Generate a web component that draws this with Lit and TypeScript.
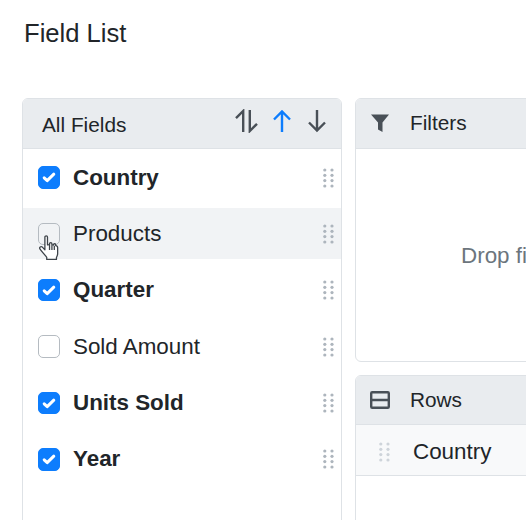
import { LitElement, html, css, svg } from "lit";
import { customElement } from "lit/decorators.js";

const FIELDS = [
  { name: "Country", on: true },
  { name: "Products", on: false, hover: true },
  { name: "Quarter", on: true },
  { name: "Sold Amount", on: false },
  { name: "Units Sold", on: true },
  { name: "Year", on: true },
];

const grip = (cls: string) => html`<svg class=${cls} width="11" height="20" viewBox="0 0 11 20">
  ${[2, 7.3, 12.6, 18].map((y) => svg`<circle cx="1.8" cy=${y} r="1.6"></circle><circle cx="9" cy=${y} r="1.6"></circle>`)}
</svg>`;

@customElement("app-root")
export class AppRoot extends LitElement {
  static styles = css`
    :host {
      display: block;
      width: 526px;
      height: 520px;
      overflow: hidden;
      background: #fff;
      font-family: "Liberation Sans", Arial, sans-serif;
      color: #212529;
    }
    .title {
      font-size: 25.6px;
      line-height: 28px;
      font-weight: 400;
      margin: 0;
      padding: 19px 0 0 24px;
      height: 98px;
      box-sizing: border-box;
    }
    .columns {
      display: grid;
      grid-template-columns: 320px 320px;
      column-gap: 13px;
      padding-left: 22px;
      align-items: start;
    }
    .stack {
      display: flex;
      flex-direction: column;
      gap: 13px;
    }
    .panel {
      border: 1px solid #dee2e6;
      border-radius: 6px;
      box-sizing: border-box;
      background: #fff;
      overflow: hidden;
    }
    .fields { height: 480px; }
    .filters { height: 264px; }
    .rows { height: 200px; }
    .head {
      display: flex;
      align-items: center;
      height: 50px;
      background: #e9ecef;
      border-bottom: 1px solid #dee2e6;
      box-sizing: border-box;
      font-size: 20.8px;
    }
    .head.all {
      padding: 0 12px 0 19px;
      justify-content: space-between;
    }
    .head.all span { position: relative; top: 1px; }
    .sorters {
      display: flex;
      gap: 11px;
      align-items: center;
      position: relative;
      top: -3px;
    }
    .sorters svg { display: block; }
    .head.drop { padding: 0 0 2px 14px; gap: 20px; }
    .rows .head.drop { height: 49px; padding-bottom: 1px; }
    .head.drop svg { display: block; flex: none; }
    .list {
      display: flex;
      flex-direction: column;
      gap: 5.4px;
      padding-top: 3px;
    }
    .row {
      height: 51px;
      display: flex;
      align-items: center;
      padding: 0 7px 0 15px;
      font-size: 22.4px;
      position: relative;
    }
    .row.hover { background: #f1f3f5; }
    .box {
      width: 22.4px;
      height: 22.4px;
      flex: none;
      box-sizing: border-box;
      border-radius: 5px;
      border: 1.25px solid #b5bbc1;
      background: #fff;
      display: flex;
      align-items: center;
      justify-content: center;
    }
    .box.on { background: #0d7dfd; border-color: #0d7dfd; }
    .row.hover .box { background: #f1f3f5; }
    .label { margin-left: 12.6px; flex: 1; }
    .label.on { font-weight: 700; }
    .grip { fill: #adb5bd; flex: none; }
    .cursor {
      position: absolute;
      left: 15px;
      top: 27px;
    }
    .empty {
      height: 213px;
      display: flex;
      align-items: center;
      padding-left: 105px;
      font-size: 22.4px;
      color: #6c757d;
      white-space: nowrap;
    }
    .item {
      height: 51px;
      display: flex;
      align-items: center;
      gap: 23px;
      padding: 4px 0 0 23px;
      background: #f8f9fa;
      border-bottom: 1px solid #dee2e6;
      box-sizing: border-box;
      font-size: 22.4px;
    }
    .grip.soft { fill: #ced4da; }
  `;

  render() {
    return html`
      <h1 class="title">Field List</h1>
      <div class="columns">
        <section class="panel fields">
          <div class="head all">
            <span>All Fields</span>
            <div class="sorters">
              <svg width="24" height="24" viewBox="0 0 24 24" fill="none" stroke="#495057" stroke-width="2.4">
                <path d="M1 9.200 8.200 2V23"></path>
                <path d="M14.800 1V22L22 14.800"></path>
              </svg>
              <svg width="24" height="24" viewBox="0 0 24 24" fill="none" stroke="#0d7dfd" stroke-width="2.4">
                <path d="M12 23V2.500M4 10.500l8-8 8 8"></path>
              </svg>
              <svg width="24" height="24" viewBox="0 0 24 24" fill="none" stroke="#495057" stroke-width="2.4">
                <path d="M12 1v20.500M4 13.500l8 8 8-8"></path>
              </svg>
            </div>
          </div>
          <div class="list">
            ${FIELDS.map(
              (f) => html`<div class="row ${f.hover ? "hover" : ""}">
                <span class="box ${f.on ? "on" : ""}">
                  ${f.on
                    ? html`<svg width="14" height="11" viewBox="0 0 14 11" fill="none" stroke="#fff" stroke-width="3" stroke-linecap="round" stroke-linejoin="round"><path d="M2.200 5.800 5.200 8.600 11.800 2.200"></path></svg>`
                    : ""}
                </span>
                <span class="label ${f.on ? "on" : ""}">${f.name}</span>
                ${grip("grip")}
                ${f.hover
                  ? html`<svg class="cursor" width="22" height="27" viewBox="0 0 20 25" fill="#fff" stroke="#3d4349" stroke-width="1.200" stroke-linejoin="round">
                      <path d="M6.200 1.900c0-1.500 2.400-1.500 2.400 0v7.300l1.900-.3v-.9c0-1.300 2.200-1.300 2.200 0v1.200l1.500.1v-.5c0-1.100 2-1.100 2 0v1l.9.2c.6.3.9.8.9 1.600v5.600c0 1.400-.4 2.400-1.100 3.600v1.800H7.900v-1.900c-1.200-1.500-5.600-6.700-6.300-7.800-.9-1.400.9-2.800 2.200-1.700l2.400 2.400z"></path>
                      <path d="M10.500 9v5M12.700 9.500V14M14.900 10v4" fill="none"></path>
                    </svg>`
                  : ""}
              </div>`
            )}
          </div>
        </section>
        <div class="stack">
          <section class="panel filters">
            <div class="head drop">
              <svg width="20" height="20" viewBox="0 0 20 20" fill="#495057"><path d="M1 1.500h18l-6.500 8v9.500l-4.500-2.600v-6.900z"></path></svg>
              <span>Filters</span>
            </div>
            <div class="empty">Drop fields here</div>
          </section>
          <section class="panel rows">
            <div class="head drop">
              <svg width="20" height="20" viewBox="0 0 20 20" fill="none" stroke="#495057" stroke-width="2.400"><rect x="1.200" y="2.200" width="17.600" height="15.600" rx="1"></rect><path d="M1 10h18"></path></svg>
              <span>Rows</span>
            </div>
            <div class="item">${grip("grip soft")}<span>Country</span></div>
          </section>
        </div>
      </div>
    `;
  }
}
